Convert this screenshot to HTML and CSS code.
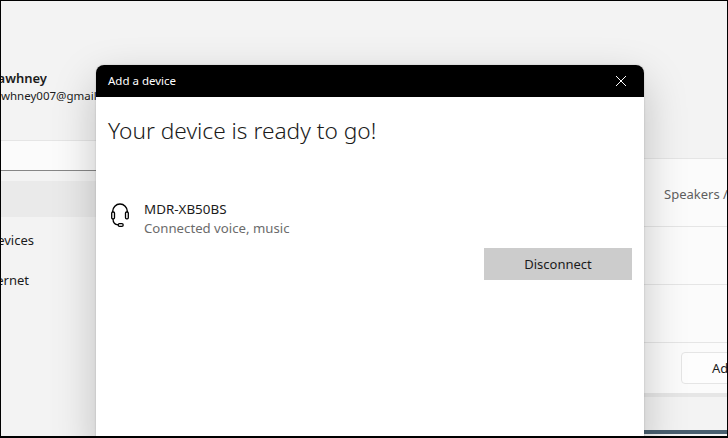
FILE: index.html
```html
<!DOCTYPE html>
<html lang="en">
<head>
<meta charset="utf-8">
<title>Add a device</title>
<link rel="stylesheet" href="styles.css">
</head>
<body>
<div class="window">
  <div class="settings">
    <aside class="nav">
      <div class="profile">
        <div class="profile-name">Sawhney</div>
        <div class="profile-mail">sawhney007@gmail.com</div>
      </div>
      <div class="search"></div>
      <div class="nav-item nav-item-active"></div>
      <div class="nav-item nav-item-devices">Bluetooth &amp; devices</div>
      <div class="nav-item nav-item-network">Network &amp; internet</div>
    </aside>
    <main class="content">
      <div class="row row-speakers"><span class="row-label">Speakers / headphones</span></div>
      <div class="row row-plain"></div>
      <div class="row row-short"></div>
      <div class="row row-action"><button class="add-button" type="button">Add device</button></div>
      <div class="band"></div>
      <div class="row-tail"></div>
      <div class="slate"></div>
    </main>
  </div>
  <section class="dialog">
    <header class="dialog-bar">
      <span class="dialog-title">Add a device</span>
      <svg class="close-icon" width="12" height="12" viewBox="0 0 12 12" aria-hidden="true"><path d="M1 1l10 10M11 1L1 11" fill="none" stroke="#fff" stroke-width="1"/></svg>
    </header>
    <div class="dialog-body">
      <h1 class="dialog-heading">Your device is ready to go!</h1>
      <div class="device">
        <svg class="device-icon" width="18" height="24" viewBox="0 0 18 24" aria-hidden="true">
          <path d="M1.7 10V8.3a7.3 7.3 0 0 1 14.6 0V10" fill="none" stroke="#000" stroke-width="1.4"/>
          <rect x="0.7" y="9" width="2.8" height="6.8" rx="1.1" fill="#fff" stroke="#000" stroke-width="1.3"/>
          <rect x="14.5" y="9" width="2.8" height="6.8" rx="1.1" fill="#fff" stroke="#000" stroke-width="1.3"/>
          <path d="M2 15.8c0 3.6 1.6 5.8 5.2 6.1" fill="none" stroke="#000" stroke-width="1.3"/>
          <rect x="7.2" y="20.6" width="5" height="2.7" rx="1.3" fill="#fff" stroke="#000" stroke-width="1.3"/>
        </svg>
        <div class="device-text">
          <div class="device-name">MDR-XB50BS</div>
          <div class="device-status">Connected voice, music</div>
        </div>
      </div>
      <div class="actions"><button class="disconnect" type="button">Disconnect</button></div>
    </div>
  </section>
</div>
</body>
</html>
```

FILE: styles.css
```css
* { box-sizing: border-box; }
html, body { margin: 0; padding: 0; }
body { width: 728px; height: 438px; overflow: hidden; font-family: "Noto Sans", "Open Sans", sans-serif; color: #1b1b1b; }

.window { position: relative; width: 728px; height: 438px; border: 1px solid #000; border-bottom-width: 2px; overflow: hidden; background: #f3f3f3; }
.settings { display: flex; justify-content: space-between; height: 100%; }

.nav { width: 95px; flex: none; display: flex; flex-direction: column; align-items: flex-end; padding-top: 68px; overflow: hidden; }
.profile { width: 95px; height: 71px; display: flex; flex-direction: column; white-space: nowrap; }
.profile-name { font-size: 13px; font-weight: 600; line-height: 18px; margin-left: -6px; width: 52px; overflow: hidden; direction: rtl; color: #1b1b1b; }
.profile-mail { font-size: 11.5px; line-height: 18px; margin-left: -12px; }
.search { width: 100%; height: 31px; background: #fbfbfb; border-top: 1px solid #e5e5e5; border-bottom: 1px solid #868686; flex: none; }
.nav-item { width: 100%; height: 36px; flex: none; margin-top: 4px; font-size: 13px; line-height: 38px; white-space: nowrap; display: flex; justify-content: flex-end; }
.nav-item-active { margin-top: 10px; background: #eaeaea; }
.nav-item-devices { padding-right: 62px; }
.nav-item-network { padding-right: 67px; }

.content { width: 84px; flex: none; padding-top: 157px; display: flex; flex-direction: column; overflow: hidden; }
.row { flex: none; background: #fbfbfb; border-top: 1px solid #e5e5e5; white-space: nowrap; }
.row-speakers { height: 68px; padding: 26px 0 0 21px; }
.row-label { font-size: 13px; line-height: 18px; color: #5f5f5f; display: block; }
.row-plain { height: 58px; }
.row-short { height: 58px; }
.row-action { height: 51px; padding: 9px 0 0 38px; }
.add-button { width: 90px; height: 32px; padding: 0 0 0 30px; text-align: left; white-space: nowrap; font: 13px/30px "Noto Sans", sans-serif; color: #1b1b1b; background: #fdfdfd; border: 1px solid #e5e5e5; border-radius: 4px; }
.band { height: 4px; flex: none; background: #e6e6e6; }
.row-tail { height: 33px; flex: none; }
.slate { height: 4px; flex: none; background: #4a6070; }

.dialog { position: absolute; left: 95px; top: 64px; width: 548px; height: 380px; background: #fff; border-radius: 8px 8px 0 0; box-shadow: 0 16px 44px rgba(0, 0, 0, .22), 0 0 2px rgba(0, 0, 0, .2); }
.dialog-bar { height: 32px; padding: 0 17px 2px 12px; display: flex; align-items: center; justify-content: space-between; background: #000; border-radius: 8px 8px 0 0; }
.dialog-title { font-size: 11.5px; color: #fff; }
.close-icon { display: block; margin-top: 2px; }
.dialog-body { padding: 0 12px; }
.dialog-heading { margin: 17px 0 0; font-size: 22.7px; line-height: 33px; font-weight: 300; color: #1b1b1b; }
.device { display: flex; align-items: flex-start; margin-top: 51px; }
.device-icon { flex: none; margin: 5px 15px 0 3px; }
.device-text { padding-top: 2px; }
.device-name { font-size: 13.4px; line-height: 19px; color: #1b1b1b; }
.device-status { font-size: 13.2px; line-height: 18px; color: #6b6b6b; }
.actions { display: flex; justify-content: flex-end; margin-top: 11px; }
.disconnect { width: 148px; height: 32px; border: 0; padding: 0; font: 13px/32px "Noto Sans", sans-serif; color: #1b1b1b; background: #cccccc; }
```
